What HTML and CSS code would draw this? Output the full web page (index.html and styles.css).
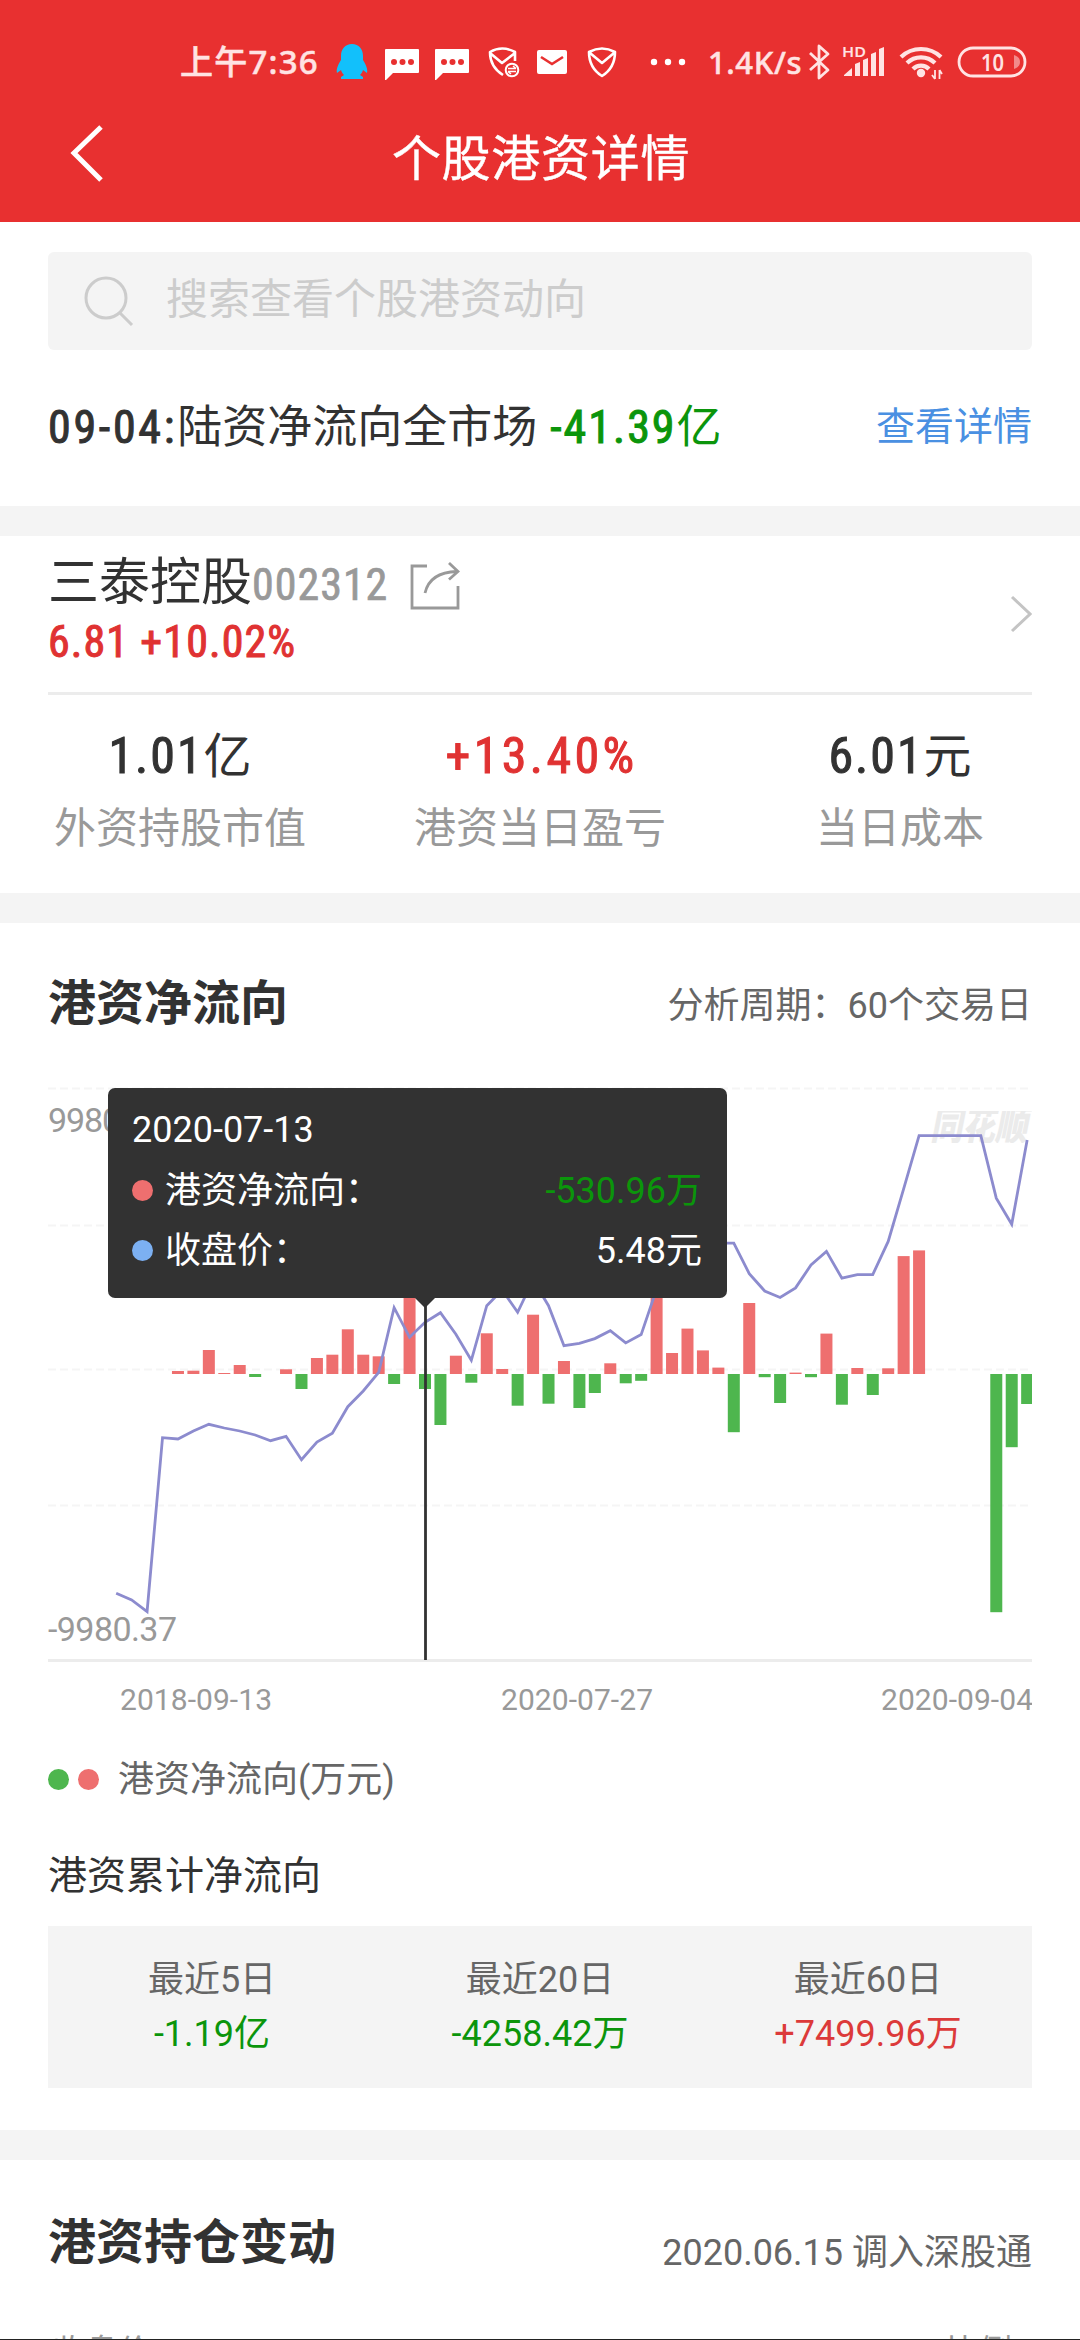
FILE: index.html
```html
<!DOCTYPE html>
<html lang="zh-CN">
<head>
<meta charset="utf-8">
<title>个股港资详情</title>
<link rel="stylesheet" href="styles.css">
</head>
<body>
<header class="top">
  <div class="status">
    <span class="clock">上午7:36</span>
    <svg class="notif" viewBox="330 40 370 44" width="370" height="44">
      <path fill="#12c0fb" d="M352 44c-7 0-11 5-11 12v4c-3 5-5 9-4 13l4-3c1 3 2 4 3 5l-3 2v2h22v-2l-3-2c1-1 2-2 3-5l4 3c1-4-1-8-4-13v-4c0-7-4-12-11-12z"/>
      <path fill="#fff" d="M386 49h32q1 0 1 1v22q0 1-1 1h-25l-7 7h-1V50q0-1 1-1zM436 49h32q1 0 1 1v22q0 1-1 1h-25l-7 7h-1V50q0-1 1-1z"/>
      <g fill="#e83030"><circle cx="394" cy="62" r="3"/><circle cx="402.500" cy="62" r="3"/><circle cx="411" cy="62" r="3"/><circle cx="444" cy="62" r="3"/><circle cx="452.500" cy="62" r="3"/><circle cx="461" cy="62" r="3"/></g>
      <g fill="none" stroke="#fff" stroke-width="2.600" stroke-linejoin="round">
        <path d="M503 75c-8-5-13-13-13-23q12-7 25 0v9M490 53l12 10 13-10"/>
        <circle cx="512" cy="70" r="6.300" stroke-width="2"/><path d="M508 68.500h8m-3-2.500 3 2.500M516 71.500h-8m3 2.500-3-2.500" stroke-width="1.500"/>
        <path d="M589 52q13-7 26 0c0 11-5 19-13 24-8-5-13-13-13-24zM590 53l12 10 12-10"/>
      </g>
      <rect x="537" y="50" width="30" height="24" rx="2" fill="#fff"/><path d="M541 57l11 7 11-7" fill="none" stroke="#e83030" stroke-width="2.600"/>
      <g fill="#fff"><circle cx="654" cy="62" r="3.200"/><circle cx="668" cy="62" r="3.200"/><circle cx="682" cy="62" r="3.200"/></g>
    </svg>
    <span class="speed">1.4K/s</span>
    <svg class="radio" viewBox="806 40 224 44" width="224" height="44">
      <path d="M810 53l18 17-9 8V46l9 8-18 16" fill="none" stroke="#ffe3e3" stroke-width="2.800" stroke-linejoin="round"/>
      <text class="hd" x="842" y="57" textLength="24" lengthAdjust="spacingAndGlyphs">HD</text>
      <path fill="#ffe3e3" d="M844 75l8-7v8h-8zM855 64l5-2v14h-5zM863 60l5-2v18h-5zM871 54l5-2v24h-5zM879 49l5-2v29h-5z"/>
      <g fill="none" stroke="#ffe3e3" stroke-width="4.200"><path d="M901 57a29 29 0 0 1 40 0M907 63a20 20 0 0 1 28 0M913 69a11 11 0 0 1 16 0"/></g>
      <circle cx="921" cy="73" r="4.200" fill="#ffe3e3"/>
      <path d="M935 70v9m-3-4 3 4M939.500 79v-9m2.500 4-2.500-4" stroke="#ffe3e3" stroke-width="1.800" fill="none"/>
      <rect x="959" y="48" width="66" height="28" rx="14" fill="none" stroke="#ffe3e3" stroke-width="2.800"/>
      <path d="M1014 55q6 2 6 7t-6 7z" fill="#f28b8b"/>
      <text class="batt" x="981" y="71" textLength="23" lengthAdjust="spacingAndGlyphs">10</text>
    </svg>
  </div>
  <div class="nav">
    <svg class="back" viewBox="0 0 40 64" width="40" height="64"><path d="M33 6 6 32l27 27" fill="none" stroke="#fff" stroke-width="5"/></svg>
    <h1>个股港资详情</h1>
  </div>
</header>

<section class="market">
  <div class="search">
    <svg viewBox="0 0 52 52" width="52" height="52"><g fill="none" stroke="#ccc" stroke-width="3"><circle cx="23" cy="23" r="20"/><path d="M37 38l12 12"/></g></svg>
    <span>搜索查看个股港资动向</span>
  </div>
  <div class="flow">
    <span class="flow-text"><span class="din date">09-04:</span>陆资净流向全市场<span class="green amount"><span class="din">-41.39</span>亿</span></span>
    <span class="link">查看详情</span>
  </div>
</section>

<section class="stock">
  <div class="stock-head">
    <div>
      <div class="name-row"><span class="name">三泰控股</span><span class="din code">002312</span>
        <svg class="share" viewBox="0 0 50 50" width="50" height="50"><g fill="none" stroke="#999" stroke-width="2.800"><path d="M17 6H2v42h46V26"/><path d="M15 33C18 20 28 12 47 11.500M39 3l9 8.500-9 8"/></g></svg>
      </div>
      <div class="din price">6.81 +10.02%</div>
    </div>
    <svg class="chev" viewBox="0 0 22 38" width="22" height="38"><path d="M2 2l18 17L2 36" fill="none" stroke="#c4c4c4" stroke-width="3"/></svg>
  </div>
  <div class="stats">
    <div class="stat"><b><span class="din">1.01</span>亿</b><span>外资持股市值</span></div>
    <div class="stat red"><b><span class="din">+13.40%</span></b><span>港资当日盈亏</span></div>
    <div class="stat"><b><span class="din">6.01</span>元</b><span>当日成本</span></div>
  </div>
</section>

<section class="netflow">
  <div class="title-row"><h2>港资净流向</h2><span class="period">分析周期：60个交易日</span></div>
  <div class="chart">
    <svg id="plot" viewBox="48 1080 984 660" width="984" height="660">
      <defs><clipPath id="mark"><rect x="925" y="1111" width="110" height="32"/></clipPath></defs>
      <g stroke="#f5f5f5" stroke-width="2" stroke-dasharray="8 4"><path d="M48 1088.500H1032M48 1225.500H1032M48 1369.500H1032M48 1505.500H1032"/></g>
      <path d="M48 1660.500H1032" stroke="#ececec" stroke-width="3"/>
      <g clip-path="url(#mark)"><text class="mark" x="930" y="1140" textLength="97" lengthAdjust="spacingAndGlyphs">同花顺</text></g>
      <g id="bars"></g>
      <polyline id="line" fill="none" stroke="#8c8bce" stroke-width="2.800"/>
      <path d="M425.500 1298V1660" stroke="#323232" stroke-width="2.800"/>
      <g class="axis"><text x="48" y="1131.500" textLength="117">9980.37</text><text x="48" y="1641" textLength="129">-9980.37</text></g>
      <g class="dates"><text x="120" y="1710" textLength="152">2018-09-13</text><text x="501" y="1710" textLength="152">2020-07-27</text><text x="881" y="1710" textLength="152">2020-09-04</text></g>
    </svg>
    <div class="tip">
      <div class="tip-row">2020-07-13</div>
      <div class="tip-row"><i class="dot pink"></i><span>港资净流向：</span><span class="val green">-530.96万</span></div>
      <div class="tip-row"><i class="dot blue"></i><span>收盘价：</span><span class="val">5.48元</span></div>
    </div>
  </div>
  <div class="legend"><i class="dot leaf"></i><i class="dot pink"></i><span>港资净流向(万元)</span></div>
  <h3>港资累计净流向</h3>
  <div class="totals">
    <div><span>最近5日</span><span class="green">-1.19亿</span></div>
    <div><span>最近20日</span><span class="green">-4258.42万</span></div>
    <div><span>最近60日</span><span class="red">+7499.96万</span></div>
  </div>
</section>

<section class="holding">
  <div class="title-row"><h2>港资持仓变动</h2><span class="period">2020.06.15 调入深股通</span></div>
  <div class="cols"><span>收盘价</span><span>比例</span></div>
</section>
<script src="chart.js"></script>
</body>
</html>
```
FILE: styles.css
```css
* { box-sizing: border-box; margin: 0; padding: 0; }
html { background: #fff; }
body {
  width: 1080px; height: 2340px; overflow: hidden;
  display: flex; flex-direction: column;
  font-family: Roboto, "Noto Sans CJK SC", sans-serif;
  color: #323232; background: #fff;
  border-bottom: 1px solid #222;
  white-space: nowrap;
}
body > * { flex-shrink: 0; }
svg { display: block; flex-shrink: 0; }
h1, h2, h3 { font-weight: 400; }
i { font-style: normal; }
.green { color: #0b950b; }
.red { color: #e03232; }
.din { font-family: "Roboto Condensed", "DIN Alternate", Roboto, sans-serif; font-weight: 400; -webkit-text-stroke: 1px currentColor; letter-spacing: 2px; }

.top { height: 222px; background: #e83030; color: #fff; }
.status { height: 84px; padding: 40px 0 0 180px; display: flex; color: #ffe3e3; }
.clock { width: 150px; font: 500 33px/44px "Noto Sans", "Noto Sans CJK SC", sans-serif; letter-spacing: 1.2px; -webkit-text-stroke: .5px currentColor; }
.speed { width: 98px; margin-left: 8px; font: 500 31px/44px "Noto Sans", sans-serif; letter-spacing: .6px; -webkit-text-stroke: .5px currentColor; }
.hd { font: 600 14px "Noto Sans", sans-serif; fill: #ffe3e3; }
.batt { font: 600 23px "Noto Sans", sans-serif; fill: #ffe3e3; }
.nav { height: 138px; padding-left: 68px; display: flex; align-items: flex-start; }
.back { margin-top: 37px; }
h1 { width: 864px; padding-left: 2px; text-align: center; font-size: 49px; line-height: 72px; margin-top: 40px; letter-spacing: .7px; -webkit-text-stroke: .4px currentColor; }

.market { height: 284px; padding: 30px 48px 0; }
.search { height: 98px; padding-left: 35px; border-radius: 6px; background: #f4f4f4; display: flex; align-items: center; gap: 31px; color: #ccc; font-size: 42px; }
.search span { margin-top: -11px; }
.flow { height: 146px; display: flex; justify-content: space-between; align-items: center; font-size: 45px; }
.flow-text .din { font-size: 46px; }
.flow-text .date { letter-spacing: 2.7px; }
.amount { margin-left: 13px; }
.link { color: #4a90e2; font-size: 39px; }

.stock { height: 387px; border-top: 30px solid #f4f4f4; padding: 0 48px; }
.stock-head { height: 159px; border-bottom: 3px solid #ececec; display: flex; justify-content: space-between; }
.name-row { height: 80px; display: flex; align-items: flex-end; }
.name { font-size: 51px; line-height: 66px; }
.code { width: 134px; font-size: 44px; line-height: 61px; color: #999; letter-spacing: 1px; -webkit-text-stroke-width: .7px; }
.share { margin: 0 0 6px 24px; }
.price { font-size: 44px; line-height: 52px; color: #e03232; letter-spacing: 1.1px; }
.chev { margin-top: 59px; }
.stats { display: grid; grid-template-columns: repeat(3, 1fr); margin: 0 -48px; padding-top: 26px; }
.stat { display: flex; flex-direction: column; align-items: center; }
.stat b { font-weight: 400; font-size: 48px; line-height: 70px; height: 70px; }
.stat span { color: #999; font-size: 42px; line-height: 76px; }
.stat b .din { color: #323232; font-size: 50px; line-height: 70px; }
.stat.red b .din { color: #e03232; letter-spacing: 3.4px; margin-right: -3px; }

.netflow { height: 1237px; border-top: 30px solid #f4f4f4; padding: 0 48px; }
.title-row { display: flex; justify-content: space-between; align-items: center; height: 157px; }
h2 { font-size: 48px; font-weight: 700; margin-top: -5px; }
.period { font-size: 36px; color: #666; }
.chart { position: relative; height: 660px; }
.axis { font-size: 34px; fill: #999; }
.dates { font-size: 30px; fill: #999; }
.mark { font: italic 900 41px "Noto Sans CJK SC", sans-serif; fill: #ebebeb; }
.tip { position: absolute; left: 60px; top: 8px; width: 619px; height: 210px; padding: 12px 25px 12px 24px; border-radius: 7px; background: #323232; color: #fff; font-size: 36px; }
.tip::after { content: ""; position: absolute; left: 307px; top: 210px; border: 10px solid transparent; border-top-color: #323232; border-bottom: 0; }
.tip-row { height: 60px; display: flex; align-items: center; }
.tip-row span { margin-top: -7px; }
.dot { display: block; flex: none; width: 21px; height: 21px; border-radius: 50%; margin-right: 12px; }
.pink { background: #ee6f6f; }
.blue { background: #7cb0f2; }
.leaf { background: #4eb64e; }
.tip-row .val { margin-left: auto; }
.legend { height: 78px; display: flex; align-items: center; font-size: 36px; color: #666; }
.legend span { margin-top: -7px; }
.legend .leaf { margin-right: 9px; }
.legend .pink { margin-right: 19px; }
h3 { font-size: 39px; line-height: 58px; height: 108px; padding-top: 29px; }
.totals { height: 162px; background: #f4f4f4; display: grid; grid-template-columns: repeat(3, 1fr); font-size: 36px; line-height: 54px; }
.totals div { display: flex; flex-direction: column; align-items: center; padding-top: 27px; color: #666; }
.totals .green { color: #0b950b; }
.totals .red { color: #dc3a3a; }

.holding { height: 210px; border-top: 30px solid #f4f4f4; padding: 0 48px; overflow: hidden; }
.holding .title-row { height: 164px; }
.holding h2 { margin-top: -8px; }
.holding .period { margin-top: 13px; }
.cols { display: flex; justify-content: space-between; font-size: 33px; color: #999; line-height: 48px; padding: 4px 20px 0 4px; }
```
FILE: chart.js
```js
// Bar heights in pixels: positive is inflow, negative is outflow
const flows = [0,0,0,0,3,3.3,24,1,9,-3,0,4.7,-15,16,19.3,44.7,19.3,17.7,-10,90,-15,-51,18.3,-8.7,40.7,5,-31.7,59.3,-29.7,13,-34,-19,10.7,-9.3,-6.8,90,21,45.4,23.6,6.4,-58.2,71,-3.2,-29,1.4,-3.2,40.4,-30.7,6,-21,5.7,117.9,123.6,0,0,0,0,-238.2,-73.2,-30];
const prices = [1593.3,1600,1611.7,1437.7,1439,1431,1424.3,1428,1431,1435,1440.7,1436.3,1459.7,1442,1433.3,1406.7,1391,1372.3,1307.7,1337.3,1322.3,1312.7,1334.3,1360.3,1305.7,1290,1312.3,1280,1305.7,1345.7,1343.3,1338.6,1330.7,1342.9,1334.6,1289,1260,1250,1245,1243.2,1243.2,1273.6,1291,1297.5,1287.9,1265,1251.4,1278.2,1274.6,1274.6,1241.4,1188.9,1135.7,1135.7,1135.7,1135.7,1135.7,1198.2,1224.3,1140];
const zero = 1374;
const x = i => 116.2 + 15.44 * i;
const bars = document.getElementById('bars');
flows.forEach((v, i) => {
  if (!v) return;
  const r = document.createElementNS('http://www.w3.org/2000/svg', 'rect');
  r.setAttribute('x', x(i) - 6);
  r.setAttribute('y', v > 0 ? zero - v : zero);
  r.setAttribute('width', 12);
  r.setAttribute('height', Math.abs(v));
  r.setAttribute('fill', v > 0 ? '#ee6f6f' : '#4eb64e');
  bars.appendChild(r);
});
document.getElementById('line').setAttribute('points', prices.map((y, i) => x(i) + ',' + y).join(' '));
```
